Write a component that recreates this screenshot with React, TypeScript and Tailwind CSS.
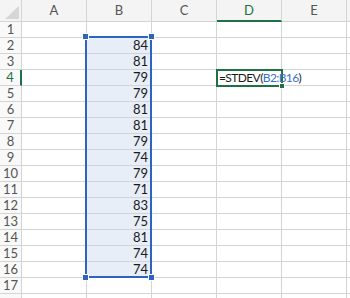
import React from 'react';

const cols = ['A', 'B', 'C', 'D', 'E'];
const values: Record<number, number> = {
  2: 84, 3: 81, 4: 79, 5: 79, 6: 81, 7: 81, 8: 79, 9: 74,
  10: 79, 11: 71, 12: 83, 13: 75, 14: 81, 15: 74, 16: 74,
};
const rows = Array.from({ length: 17 }, (_, i) => i + 1);

const font = { fontFamily: 'Lato, "Liberation Sans", sans-serif' };

const Handle: React.FC<{ className: string }> = ({ className }) => (
  <div className={`absolute w-[7px] h-[7px] bg-[#2f63c1] border border-white ${className}`} />
);

const App: React.FC = () => {
  return (
    <div className="w-[350px] h-[298px] overflow-hidden bg-white text-[13px]" style={font}>
      {/* column headers */}
      <div className="flex h-[22px]">
        <div className="relative w-[22px] shrink-0 border-r border-b border-[#d4d4d4] bg-[#f4f4f4]">
          <svg className="absolute right-[2px] bottom-[2px]" width="14" height="13" viewBox="0 0 14 13">
            <polygon points="14,0 14,13 0,13" fill="#d6d6d6" />
          </svg>
        </div>
        {cols.map((c) => (
          <div
            key={c}
            className={`w-[65px] shrink-0 flex items-center justify-center border-r bg-[#f4f4f4] border-[#d4d4d4] ${
              c === 'D' ? 'text-[#1e7145] border-b-2 border-b-[#1e7145] pt-[2px]' : 'text-[#555] border-b'
            }`}
          >
            {c}
          </div>
        ))}
        <div className="flex-1 border-b border-[#d4d4d4] bg-[#f4f4f4]" />
      </div>

      {rows.map((r) => (
        <div key={r} className="flex h-[16px]">
          <div
            className={`w-[22px] shrink-0 flex items-center justify-center border-b border-[#d4d4d4] bg-[#f9f9f9] ${
              r === 4 ? 'text-[#1e7145] border-r-2 border-r-[#1e7145]' : 'text-[#555] border-r'
            }`}
          >
            {r}
          </div>
          {cols.map((c) => {
            const v = c === 'B' ? values[r] : undefined;
            const isActive = c === 'D' && r === 4;
            return (
              <div
                key={c}
                className={`relative w-[65px] shrink-0 flex items-center border-r border-b border-[#d4d4d4] leading-none text-[#1a1a1a] ${
                  v !== undefined ? 'bg-[#e8eef8] justify-end pr-[3px]' : ''
                } ${isActive ? 'z-10 pl-[2px] whitespace-nowrap' : ''}`}
              >
                {v}
                {c === 'B' && r === 2 && (
                  <div className="absolute -left-[2px] -top-[2px] w-[67px] h-[242px] border-2 border-[#2f63c1] z-20">
                    <Handle className="-left-[5px] -top-[5px]" />
                    <Handle className="-right-[5px] -top-[5px]" />
                    <Handle className="-left-[5px] -bottom-[5px]" />
                    <Handle className="-right-[5px] -bottom-[5px]" />
                  </div>
                )}
                {isActive && (
                  <div className="absolute -left-[1px] -top-[1px] w-[67px] h-[18px] border-2 border-[#1e7145]">
                    <div className="absolute -right-[4px] -bottom-[4px] w-[6px] h-[6px] bg-[#1e7145] border border-white" />
                  </div>
                )}
                {isActive && (
                  <span className="relative text-[12px] tracking-[-0.6px]">
                    =STDEV(<span className="text-[#3a6fcb]">B2:B16</span>)
                  </span>
                )}
              </div>
            );
          })}
          <div className="flex-1 border-b border-[#d4d4d4]" />
        </div>
      ))}
      {/* partially visible row 18 */}
      <div className="flex h-[16px]">
        <div className="w-[22px] shrink-0 border-r border-[#d4d4d4] bg-[#f9f9f9]" />
        {cols.map((c) => (
          <div key={c} className="w-[65px] shrink-0 border-r border-[#d4d4d4]" />
        ))}
      </div>
    </div>
  );
};

export default App;
